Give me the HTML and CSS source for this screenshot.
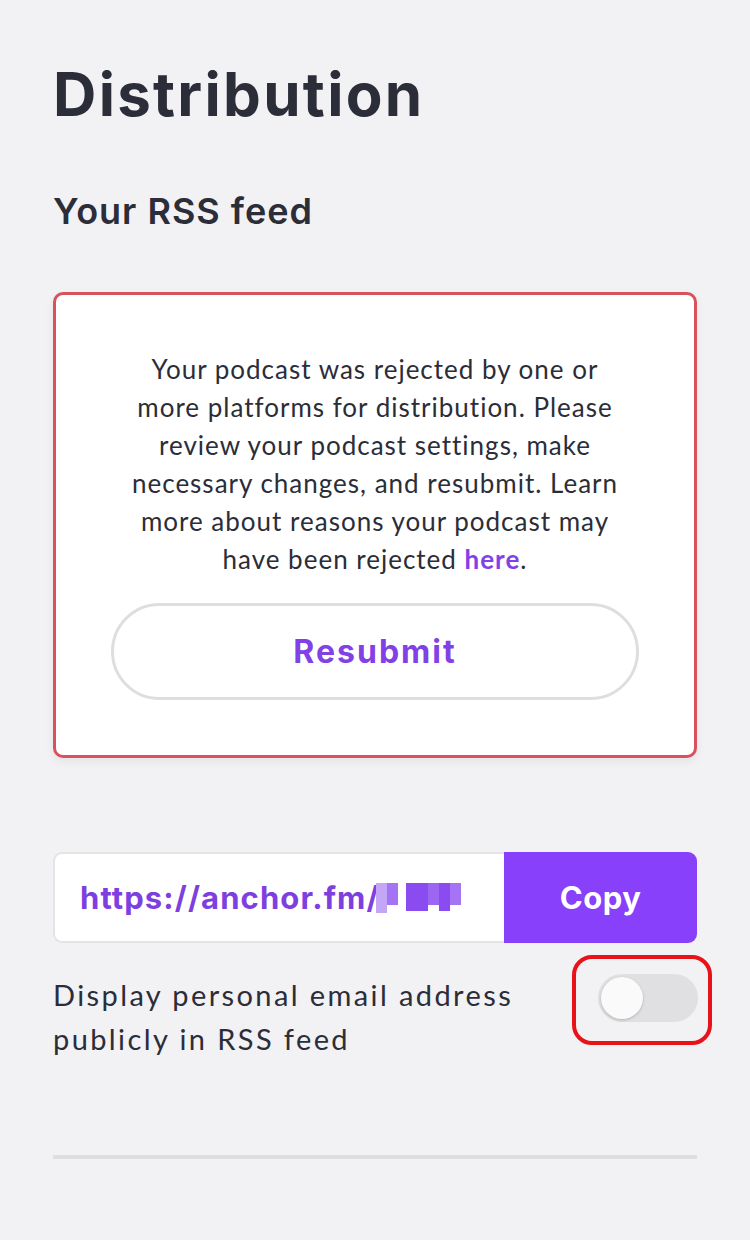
FILE: index.html
```html
<!DOCTYPE html>
<html lang="en">
<head>
    <meta charset="UTF-8">
    <meta name="viewport" content="width=device-width, initial-scale=1.0">
    <title>Distribution</title>
    <link rel="stylesheet" href="styles.css">
</head>
<body>
    <div class="page">
        <h1>Distribution</h1>
        <h2>Your RSS feed</h2>

        <div class="reject-card">
            <p>Your podcast was rejected by one or more platforms for distribution. Please review your podcast settings, make necessary changes, and resubmit. Learn more about reasons your podcast may have been rejected <a href="#">here</a>.</p>
            <button class="resubmit">Resubmit</button>
        </div>

        <div class="feed-row">
            <div class="feed-url">
                <span>https://anchor.fm/</span>
                <span class="blur">
                    <i class="px a"></i><i class="px b"></i><i class="px gap"></i><i class="px c"></i><i class="px c"></i><i class="px d"></i><i class="px c"></i><i class="px b"></i>
                </span>
            </div>
            <button class="copy">Copy</button>
        </div>

        <div class="email-row">
            <p>Display personal email address publicly in RSS feed</p>
            <div class="toggle-mark">
                <div class="toggle"><span class="knob"></span></div>
            </div>
        </div>

        <hr class="divider">
    </div>
</body>
</html>
```

FILE: styles.css
```css
body {
    margin: 0;
    background: #f2f1f4;
    font-family: 'Lato', 'Noto Sans', sans-serif;
    color: #2b2d38;
}

.page {
    padding: 52px 53px 60px;
}

h1 {
    font-family: 'Inter', sans-serif;
    font-size: 60px;
    font-weight: 700;
    letter-spacing: 2.3px;
    margin: 0;
    line-height: 84px;
}

h2 {
    font-family: 'Inter', sans-serif;
    font-size: 36px;
    font-weight: 600;
    letter-spacing: 1px;
    margin: 50px 0 0;
    line-height: 50px;
}

.reject-card {
    margin-top: 56px;
    background: #fff;
    border: 3px solid #d9515c;
    border-radius: 10px;
    box-shadow: 0 4px 10px rgba(0, 0, 0, 0.06);
    padding: 55px 55px 55px;
    text-align: center;
}

.reject-card p {
    max-width: 510px;
    margin: 0 auto;
    font-size: 26px;
    line-height: 38px;
    letter-spacing: 1px;
}

.reject-card a {
    color: #8241e6;
    font-weight: 700;
    text-decoration: none;
}

.resubmit {
    display: block;
    width: 100%;
    margin-top: 25px;
    height: 97px;
    background: #fff;
    border: 3px solid #dedee0;
    border-radius: 50px;
    color: #8241e6;
    font-family: 'Inter', sans-serif;
    font-size: 32px;
    font-weight: 700;
    letter-spacing: 2px;
}

.feed-row {
    display: flex;
    margin-top: 94px;
    height: 91px;
}

.feed-url {
    flex: 1;
    display: flex;
    align-items: center;
    background: #fff;
    border: 2px solid #e4e4e7;
    border-right: none;
    border-radius: 9px 0 0 9px;
    padding-left: 25px;
    color: #7e3fe0;
    font-family: 'Inter', sans-serif;
    font-size: 31px;
    font-weight: 700;
    letter-spacing: 1.1px;
    overflow: hidden;
    white-space: nowrap;
}

.blur {
    display: flex;
    align-items: flex-start;
    height: 30px;
    margin-left: -4px;
}

.px {
    display: block;
    width: 11px;
    height: 22px;
    background: #8a4cf0;
}

.px.a { background: #c4a6f7; height: 30px; }
.px.b { background: #a574f4; }
.px.c { height: 28px; }
.px.d { background: #9c66f2; }
.px.gap { background: transparent; width: 8px; }

.copy {
    width: 193px;
    background: #8940fa;
    border: none;
    border-radius: 0 9px 9px 0;
    color: #fff;
    font-family: 'Inter', sans-serif;
    font-size: 31px;
    font-weight: 700;
    letter-spacing: 0.5px;
}

.email-row {
    display: flex;
    justify-content: space-between;
    align-items: flex-start;
    margin-top: 12px;
}

.email-row p {
    margin: 18px 0 0;
    font-size: 29px;
    line-height: 44px;
    letter-spacing: 2.4px;
    max-width: 480px;
}

.toggle-mark {
    margin-right: -15px;
    border: 4px solid #e81319;
    border-radius: 20px;
    padding: 15px 10px 19px 22px;
}

.toggle {
    width: 100px;
    height: 48px;
    border-radius: 24px;
    background: #e0e0e2;
    position: relative;
}

.knob {
    position: absolute;
    left: 3px;
    top: 3px;
    width: 42px;
    height: 42px;
    border-radius: 50%;
    background: #fafafa;
    box-shadow: 0 1px 3px rgba(0, 0, 0, 0.2);
}

.divider {
    margin: 94px 0 0;
    border: none;
    height: 4px;
    background: #dedee1;
}
```
